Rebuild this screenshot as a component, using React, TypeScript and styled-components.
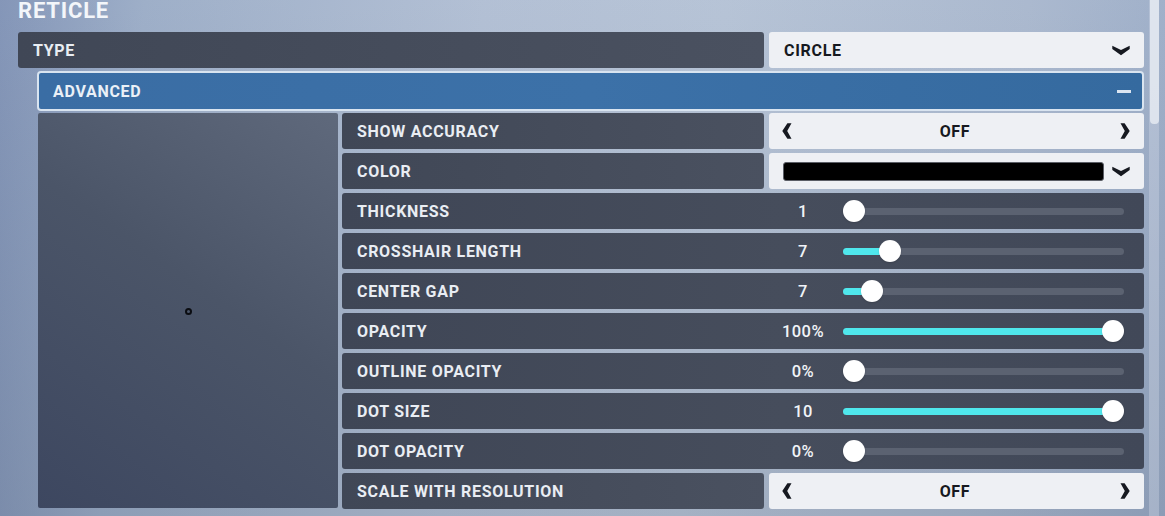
import React from "react";
import styled, { createGlobalStyle } from "styled-components";

const Global = createGlobalStyle`
  html, body { margin: 0; padding: 0; }
  body {
    width: 1165px;
    height: 516px;
    overflow: hidden;
    font-family: Roboto, "Liberation Sans", sans-serif;
  }
`;

const Page = styled.div`
  width: 1165px;
  height: 516px;
  display: flex;
  gap: 5px;
  padding: 0 6px 0 18px;
  box-sizing: border-box;
  background:
    linear-gradient(180deg, rgba(255, 255, 255, 0.06) 0%, rgba(0, 0, 0, 0.08) 100%),
    linear-gradient(95deg, #7d90b4 0%, #98aac5 12%, #aebcd2 40%, #b2c0d4 60%, #a6b5cc 85%, #97a9c5 100%);
`;

const Content = styled.div`
  flex: 1;
  display: flex;
  flex-direction: column;
`;

const Title = styled.h1`
  margin: 0 0 10px;
  font-size: 22px;
  line-height: 22px;
  font-weight: 700;
  letter-spacing: 0.8px;
  color: #f3f6fa;
`;

const Row = styled.div`
  display: grid;
  grid-template-columns: 1fr 375px;
  column-gap: 5px;
  height: 36px;
`;

const Label = styled.div`
  display: flex;
  align-items: center;
  padding-left: 15px;
  border-radius: 3px;
  background: linear-gradient(90deg, #404756 0%, #4a5160 100%);
  color: #e9edf3;
  font-size: 16px;
  font-weight: 700;
  letter-spacing: 0.7px;
`;

const ValueBox = styled.div`
  display: flex;
  align-items: center;
  justify-content: space-between;
  padding: 0 14px 0 13px;
  border-radius: 3px;
  background: #eef0f4;
  color: #161920;
  font-size: 16px;
  font-weight: 700;
  letter-spacing: 0.7px;
`;

const Plain = styled.span`
  padding-left: 2px;
`;

const CenterText = styled.span`
  flex: 1;
  text-align: center;
  padding-right: 2px;
`;

const Section = styled.div`
  margin: 3px 0 0 19px;
  display: flex;
  flex-direction: column;
  gap: 2px;
`;

const SectionHeader = styled.div`
  height: 40px;
  box-sizing: border-box;
  border: 2px solid #d9e4f0;
  border-radius: 4px;
  background: linear-gradient(90deg, #3a6da4 0%, #3c71a8 50%, #356a9f 100%);
  display: flex;
  align-items: center;
  justify-content: space-between;
  padding: 1px 11px 0 14px;
  color: #eaf0f7;
  font-size: 16px;
  font-weight: 700;
  letter-spacing: 0.7px;
`;

const Minus = styled.span`
  width: 14px;
  height: 3px;
  background: #dbe5f1;
`;

const Body = styled.div`
  display: flex;
  gap: 4px;
  margin-left: 1px;
`;

const Preview = styled.div`
  width: 300px;
  flex: none;
  height: 395px;
  border-radius: 2px;
  background: linear-gradient(215deg, #5f697c 0%, #4b5568 45%, #3d4760 100%);
  display: flex;
  align-items: center;
  justify-content: center;
`;

const Reticle = styled.span`
  width: 7px;
  height: 7px;
  border: 2px solid #0b0d12;
  border-radius: 50%;
  box-sizing: border-box;
  margin-top: 2px;
`;

const Rows = styled.div`
  flex: 1;
  display: flex;
  flex-direction: column;
  gap: 4px;
`;

const SliderRow = styled.div`
  height: 36px;
  display: grid;
  grid-template-columns: 1fr 375px;
  column-gap: 5px;
  border-radius: 3px;
  background: linear-gradient(90deg, #3f4656 0%, #464d5c 55%, #414858 100%);
  color: #e9edf3;
`;

const SliderLabel = styled.div`
  display: flex;
  align-items: center;
  padding-left: 15px;
  font-size: 16px;
  font-weight: 700;
  letter-spacing: 0.7px;
`;

const SliderControl = styled.div`
  display: flex;
  align-items: center;
  padding-right: 20px;
`;

const Num = styled.span`
  width: 68px;
  flex: none;
  text-align: center;
  font-size: 16.5px;
  font-weight: 500;
  letter-spacing: 0.4px;
  color: #f1f4f8;
  margin-right: 6px;
`;

const Track = styled.div`
  flex: 1;
  height: 7px;
  border-radius: 4px;
  background: #5b6271;
  position: relative;
`;

const Rail = styled.div`
  position: absolute;
  left: 11px;
  right: 11px;
  top: 0;
  bottom: 0;
`;

const Fill = styled.div`
  position: absolute;
  left: -11px;
  top: 0;
  bottom: 0;
  border-radius: 4px;
  background: #4fe7ec;
`;

const Thumb = styled.div`
  position: absolute;
  top: 50%;
  width: 22px;
  height: 22px;
  margin: -11px 0 0 -11px;
  border-radius: 50%;
  background: #ffffff;
  box-shadow: 0 1px 2px rgba(0, 0, 0, 0.15);
`;

const Swatch = styled.span`
  flex: 1;
  height: 19px;
  margin: 1px 8px 0 1px;
  border-radius: 3px;
  background: #000;
  border: 1px solid #5b5e66;
  box-sizing: border-box;
`;

const ScrollTrack = styled.div`
  width: 10px;
  flex: none;
  background: rgba(215, 222, 234, 0.35);
`;

const ScrollThumb = styled.div`
  height: 124px;
  margin-left: 1px;
  border-radius: 0 0 4px 4px;
  background: rgba(236, 240, 246, 0.75);
`;

const Icon = styled.svg`
  flex: none;
  display: block;
`;

const ChevronDown = () => (
  <Icon width="18" height="11" viewBox="0 0 18 11">
    <path d="M0.3 0.8 L9 5 L17.7 0.8 L17.7 4 L9 10.2 L0.3 4 Z" fill="#161920" />
  </Icon>
);

const ChevronLeft = () => (
  <Icon width="10" height="16" viewBox="0 0 10 16">
    <path d="M9.5 0.3 L5.2 8 L9.5 15.7 L5.4 15.7 L0.3 8 L5.4 0.3 Z" fill="#161920" />
  </Icon>
);

const ChevronRight = () => (
  <Icon width="10" height="16" viewBox="0 0 10 16">
    <path d="M0.5 0.3 L4.8 8 L0.5 15.7 L4.6 15.7 L9.7 8 L4.6 0.3 Z" fill="#161920" />
  </Icon>
);

type Slider = { label: string; value: string; pct: number };

const sliders: Slider[] = [
  { label: "THICKNESS", value: "1", pct: 0 },
  { label: "CROSSHAIR LENGTH", value: "7", pct: 13.9 },
  { label: "CENTER GAP", value: "7", pct: 7 },
  { label: "OPACITY", value: "100%", pct: 100 },
  { label: "OUTLINE OPACITY", value: "0%", pct: 0 },
  { label: "DOT SIZE", value: "10", pct: 100 },
  { label: "DOT OPACITY", value: "0%", pct: 0 },
];

const Toggle = ({ label, value }: { label: string; value: string }) => (
  <Row>
    <Label>{label}</Label>
    <ValueBox>
      <ChevronLeft />
      <CenterText>{value}</CenterText>
      <ChevronRight />
    </ValueBox>
  </Row>
);

export default function App() {
  return (
    <>
      <Global />
      <Page>
        <Content>
          <Title>RETICLE</Title>
          <Row>
            <Label>TYPE</Label>
            <ValueBox>
              <Plain>CIRCLE</Plain>
              <ChevronDown />
            </ValueBox>
          </Row>
          <Section>
            <SectionHeader>
              <span>ADVANCED</span>
              <Minus />
            </SectionHeader>
            <Body>
              <Preview>
                <Reticle />
              </Preview>
              <Rows>
                <Toggle label="SHOW ACCURACY" value="OFF" />
                <Row>
                  <Label>COLOR</Label>
                  <ValueBox>
                    <Swatch />
                    <ChevronDown />
                  </ValueBox>
                </Row>
                {sliders.map((s) => (
                  <SliderRow key={s.label}>
                    <SliderLabel>{s.label}</SliderLabel>
                    <SliderControl>
                      <Num>{s.value}</Num>
                      <Track>
                        <Rail>
                          {s.pct > 0 && (
                            <Fill style={{ width: `calc(${s.pct}% + 11px)` }} />
                          )}
                          <Thumb style={{ left: `${s.pct}%` }} />
                        </Rail>
                      </Track>
                    </SliderControl>
                  </SliderRow>
                ))}
                <Toggle label="SCALE WITH RESOLUTION" value="OFF" />
              </Rows>
            </Body>
          </Section>
        </Content>
        <ScrollTrack>
          <ScrollThumb />
        </ScrollTrack>
      </Page>
    </>
  );
}
